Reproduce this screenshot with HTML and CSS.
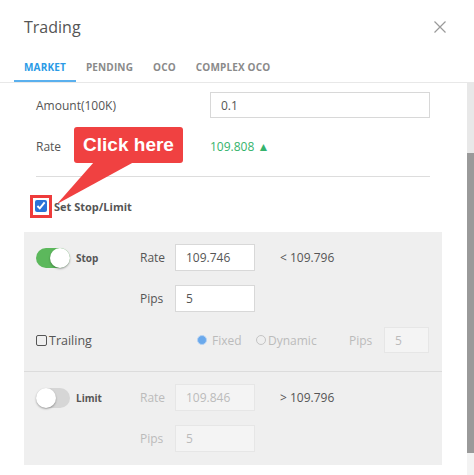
FILE: index.html
```html
<!DOCTYPE html>
<html>
<head>
    <title>Trading</title>
    <link rel="stylesheet" href="styles.css">
</head>
<body>
    <div class="dialog">
        <div class="header">
            <span class="title">Trading</span>
            <svg class="close" width="12" height="12" viewBox="0 0 12 12">
                <path d="M0.5 0.5 L11.5 11.5 M11.5 0.5 L0.5 11.5" stroke="#9a9a9a" stroke-width="1.2"/>
            </svg>
        </div>

        <div class="tabs">
            <span class="tab active">MARKET</span>
            <span class="tab">PENDING</span>
            <span class="tab">OCO</span>
            <span class="tab">COMPLEX OCO</span>
        </div>

        <div class="scrollArea">
            <div class="content">
                <div class="row">
                    <span class="label">Amount(100K)</span>
                    <input class="field wide" type="text" value="0.1">
                </div>
                <div class="row rateRow">
                    <span class="label">Rate</span>
                    <span class="rate">109.808 &#9650;</span>
                </div>
                <div class="divider"></div>

                <label class="stopLimit">
                    <span class="highlight"><input type="checkbox" checked></span>
                    <b>Set Stop/Limit</b>
                </label>

                <div class="panel">
                    <div class="section">
                        <div class="orderGrid">
                            <div class="switchCell">
                                <span class="toggle on"></span>
                                <b>Stop</b>
                            </div>
                            <span class="label">Rate</span>
                            <input class="field" type="text" value="109.746">
                            <span class="limitText">&lt; 109.796</span>

                            <span></span>
                            <span class="label">Pips</span>
                            <input class="field" type="text" value="5">
                            <span></span>
                        </div>
                        <div class="trailing">
                            <label class="trailCheck"><span class="box"></span>Trailing</label>
                            <span class="radio checked"></span><span class="muted fixedText">Fixed</span>
                            <span class="radio"></span><span class="muted dynText">Dynamic</span>
                            <span class="muted pipsLabel">Pips</span>
                            <input class="field small disabled" type="text" value="5" disabled>
                        </div>
                    </div>

                    <div class="section limitSection">
                        <div class="orderGrid">
                            <div class="switchCell">
                                <span class="toggle"></span>
                                <b>Limit</b>
                            </div>
                            <span class="label muted">Rate</span>
                            <input class="field disabled" type="text" value="109.846" disabled>
                            <span class="limitText">&gt; 109.796</span>

                            <span></span>
                            <span class="label muted">Pips</span>
                            <input class="field disabled" type="text" value="5" disabled>
                            <span></span>
                        </div>
                    </div>
                </div>
            </div>
            <div class="scrollbar"><div class="thumb"></div></div>
        </div>

        <!-- annotation on top of the screenshot -->
        <div class="callout">Click here</div>
        <svg class="calloutTail" width="90" height="44" viewBox="0 0 90 44">
            <polygon points="40,0 80,0 3,42" fill="#f04141"/>
        </svg>
    </div>
</body>
</html>
```

FILE: styles.css
```css
body {
    margin: 0;
    padding: 0;
    background: #fff;
    font-family: "Open Sans", Arial, sans-serif;
    color: #555;
}

.dialog {
    position: relative;
    width: 474px;
    height: 475px;
    overflow: hidden;
}

.header {
    display: flex;
    justify-content: space-between;
    align-items: center;
    height: 54px;
    padding: 0 28px 0 24px;
    box-sizing: border-box;
}

.title {
    font-size: 16px;
    color: #555;
}

.tabs {
    display: flex;
    height: 28px;
    padding-left: 14px;
    border-bottom: 1px solid #e8e8e8;
}

.tab {
    padding: 6px 10px 0;
    font-size: 10px;
    font-weight: bold;
    color: #8a8a8a;
    letter-spacing: 0.15px;
    border-bottom: 2px solid transparent;
}

.tab.active {
    color: #2a9ae6;
    border-bottom-color: #5ab0ee;
}

.scrollArea {
    display: flex;
    height: 392px;
}

.content {
    flex: 1;
    min-width: 0;
    padding: 9px 25px 0 24px;
}

.scrollbar {
    flex-shrink: 0;
    width: 7px;
    background: #f3f3f3;
}

.thumb {
    margin-top: 70px;
    height: 300px;
    background: #9a9a9a;
    box-shadow: 0 -70px 0 #e8e8e8;
}

.row {
    display: flex;
    align-items: center;
    padding-left: 12px;
    height: 26px;
}

.rateRow {
    margin-top: 15px;
}

.label {
    width: 174px;
    font-size: 12px;
    color: #555;
}

.rate {
    font-size: 12px;
    color: #35b36c;
}

.field {
    box-sizing: border-box;
    width: 80px;
    height: 27px;
    border: 1px solid #d8d8d8;
    background: #fff;
    padding: 0 10px;
    font-family: "Open Sans", Arial, sans-serif;
    font-size: 12px;
    color: #555;
    outline: none;
}

.field.wide {
    width: 220px;
    height: 26px;
}

.field.small {
    width: 45px;
    height: 26px;
}

.field.disabled {
    background: #f4f4f4;
    border-color: #e6e6e6;
    color: #bbb;
}

.divider {
    margin: 17px 12px 0;
    border-top: 1px solid #ddd;
}

.stopLimit {
    display: flex;
    align-items: center;
    height: 40px;
    margin-top: 9px;
    padding-left: 6px;
    font-size: 11px;
    color: #555;
}

.highlight {
    display: flex;
    align-items: center;
    justify-content: center;
    width: 16px;
    height: 17px;
    border: 3px solid #ee3b3b;
    margin-right: 2px;
}

.highlight input {
    margin: 0;
    width: 12px;
    height: 12px;
    accent-color: #2b73d8;
}

.panel {
    margin-top: 6px;
    background: #efefef;
}

.section {
    padding: 12px 12px 18px;
}

.limitSection {
    border-top: 1px solid #dcdcdc;
    padding-bottom: 13px;
}

.orderGrid {
    display: grid;
    grid-template-columns: 104px 35px 80px auto;
    row-gap: 14px;
    align-items: center;
}

.orderGrid .label {
    width: auto;
}

.limitText {
    padding-left: 25px;
    font-size: 12px;
    color: #555;
}

.switchCell {
    display: flex;
    align-items: center;
    font-size: 10px;
    color: #555;
}

.toggle {
    position: relative;
    display: inline-block;
    width: 34px;
    height: 20px;
    border-radius: 10px;
    background: #d6d6d6;
    margin-right: 6px;
}

.toggle::after {
    content: "";
    position: absolute;
    top: 0;
    left: 0;
    width: 20px;
    height: 20px;
    border-radius: 50%;
    background: #fff;
    box-shadow: 0 1px 2px rgba(0, 0, 0, 0.35);
}

.toggle.on {
    background: #5cb85c;
}

.toggle.on::after {
    left: 14px;
}

.trailing {
    display: flex;
    align-items: center;
    margin-top: 15px;
    font-size: 12px;
}

.trailCheck {
    display: flex;
    align-items: center;
    width: 161px;
    flex-shrink: 0;
    font-size: 12.5px;
    color: #555;
}

.box {
    width: 9px;
    height: 9px;
    border: 1px solid #555;
    border-radius: 2px;
    margin-right: 2px;
}

.radio {
    box-sizing: border-box;
    flex-shrink: 0;
    width: 10px;
    height: 10px;
    border-radius: 50%;
    border: 1px solid #c4c4c4;
}

.radio.checked {
    background: #6aa9ec;
    border-color: #b7d3f3;
}

.muted {
    color: #bbb;
    flex-shrink: 0;
}

.fixedText {
    width: 44px;
    margin-left: 5px;
}

.dynText {
    width: 81px;
    margin-left: 2px;
}

.pipsLabel {
    width: 35px;
}

.callout {
    position: absolute;
    left: 74px;
    top: 127px;
    width: 109px;
    height: 36px;
    line-height: 36px;
    border-radius: 3px;
    background: #f04141;
    color: #fff;
    text-align: center;
    font-family: "Liberation Sans", Arial, sans-serif;
    font-weight: bold;
    font-size: 19px;
}

.calloutTail {
    position: absolute;
    left: 54px;
    top: 162px;
}
```
